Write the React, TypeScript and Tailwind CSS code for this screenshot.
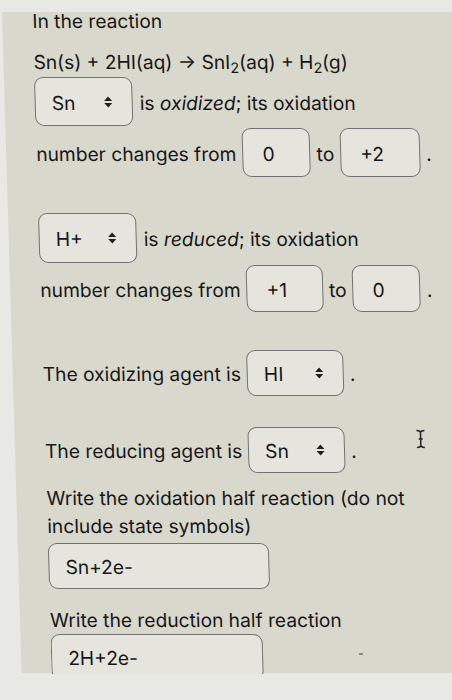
import React from "react";

function UpDown() {
  return (
    <svg width="9" height="12" viewBox="0 0 9 12" className="shrink-0">
      <path d="M4.5 0.5 L8.5 5 L0.5 5 Z" fill="#1f1f1f" />
      <path d="M0.5 7 L8.5 7 L4.5 11.5 Z" fill="#1f1f1f" />
    </svg>
  );
}

function Select({ value, h = "h-[49px]", w = "w-[98px]" }: { value: string; h?: string; w?: string }) {
  return (
    <div
      className={`${h} ${w} shrink-0 rounded-[9px] border-[1.5px] border-[#727272] bg-[#e5e4dd] flex items-center justify-between pl-[16px] pr-[19px]`}
    >
      <span className="pt-[2px]">{value}</span>
      <UpDown />
    </div>
  );
}

function Box({ value, h = "h-[49px]" }: { value: string; h?: string }) {
  return (
    <div
      className={`${h} shrink-0 rounded-[9px] border-[1.5px] border-[#727272] bg-[#e5e4dd] flex items-center pl-[19px] pr-[35px]`}
    >
      <span className="pt-[2px]">{value}</span>
    </div>
  );
}

function TextInput({ value, w }: { value: string; w: string }) {
  return (
    <div
      className={`${w} h-[46px] rounded-[9px] border-[1.5px] border-[#727272] bg-[#e5e4dd] flex items-center pl-[16px]`}
    >
      <span className="pt-[2px]">{value}</span>
    </div>
  );
}

export default function App() {
  return (
    <div className="w-[452px] h-[700px] overflow-hidden bg-[#e8e8e5] pt-[12px] pl-[2px] font-['Inter',sans-serif] text-[19.2px] leading-[28px] text-[#171717]">
      <div className="w-[480px] h-[661px] bg-[#d9d8cd] origin-top-left skew-x-[1.7deg] pl-[30px] pt-[1px]">
        <div className="leading-[16px]">In the reaction</div>

        <div className="mt-[19px]">
          Sn(s) + 2HI(aq) → SnI<sub>2</sub>(aq) + H<sub>2</sub>(g)
        </div>

        <div className="mt-[1px] flex items-center gap-[7px]">
          <Select value="Sn" />
          <span className="pt-[2px]">
            is <em>oxidized</em>; its oxidation
          </span>
        </div>

        <div className="mt-[2px] flex items-center gap-[6px]">
          <span className="pt-[2px]">number changes from</span>
          <Box value="0" />
          <span className="pt-[2px]">to</span>
          <Box value="+2" />
          <span className="pt-[2px]">.</span>
        </div>

        <div className="mt-[36px] flex items-center gap-[7px]">
          <Select value="H+" h="h-[50px]" />
          <span className="pt-[2px]">
            is <em>reduced</em>; its oxidation
          </span>
        </div>

        <div className="mt-[2px] flex items-center gap-[6px]">
          <span className="pt-[2px]">number changes from</span>
          <Box value="+1" h="h-[47px]" />
          <span className="pt-[2px]">to</span>
          <Box value="0" h="h-[47px]" />
          <span className="pt-[2px]">.</span>
        </div>

        <div className="mt-[38px] flex items-center gap-[6px]">
          <span className="pt-[2px]">The oxidizing agent is</span>
          <Select value="HI" h="h-[46px]" w="w-[97px]" />
          <span className="pt-[2px]">.</span>
        </div>

        <div className="relative mt-[31px] flex items-center gap-[6px]">
          <span className="pt-[2px]">The reducing agent is</span>
          <Select value="Sn" h="h-[46px]" w="w-[97px]" />
          <span className="pt-[2px]">.</span>
          {/* text cursor hovering over the page */}
          <svg
            width="10"
            height="20"
            viewBox="0 0 10 20"
            className="absolute left-[371px] top-[2px]"
          >
            <path
              d="M1 1.5 Q5 1.5 5 4 L5 16 Q5 18.5 1 18.5 M9 1.5 Q5 1.5 5 4 M5 16 Q5 18.5 9 18.5 M3 10 L7 10"
              fill="none"
              stroke="#2a2630"
              strokeWidth="1.6"
            />
          </svg>
        </div>

        <div className="mt-[12px] leading-[27.5px] pr-[40px]">
          Write the oxidation half reaction (do not include state symbols)
        </div>

        <div className="mt-[3px]">
          <TextInput value="Sn+2e-" w="w-[221px]" />
        </div>

        <div className="mt-[17px]">Write the reduction half reaction</div>

        <div className="relative h-[40px] overflow-hidden">
          <TextInput value="2H+2e-" w="w-[212px]" />
          <span className="absolute left-[308px] top-[19px] block w-[4px] h-[2px] bg-[#8a8a85]" />
        </div>
      </div>
    </div>
  );
}
